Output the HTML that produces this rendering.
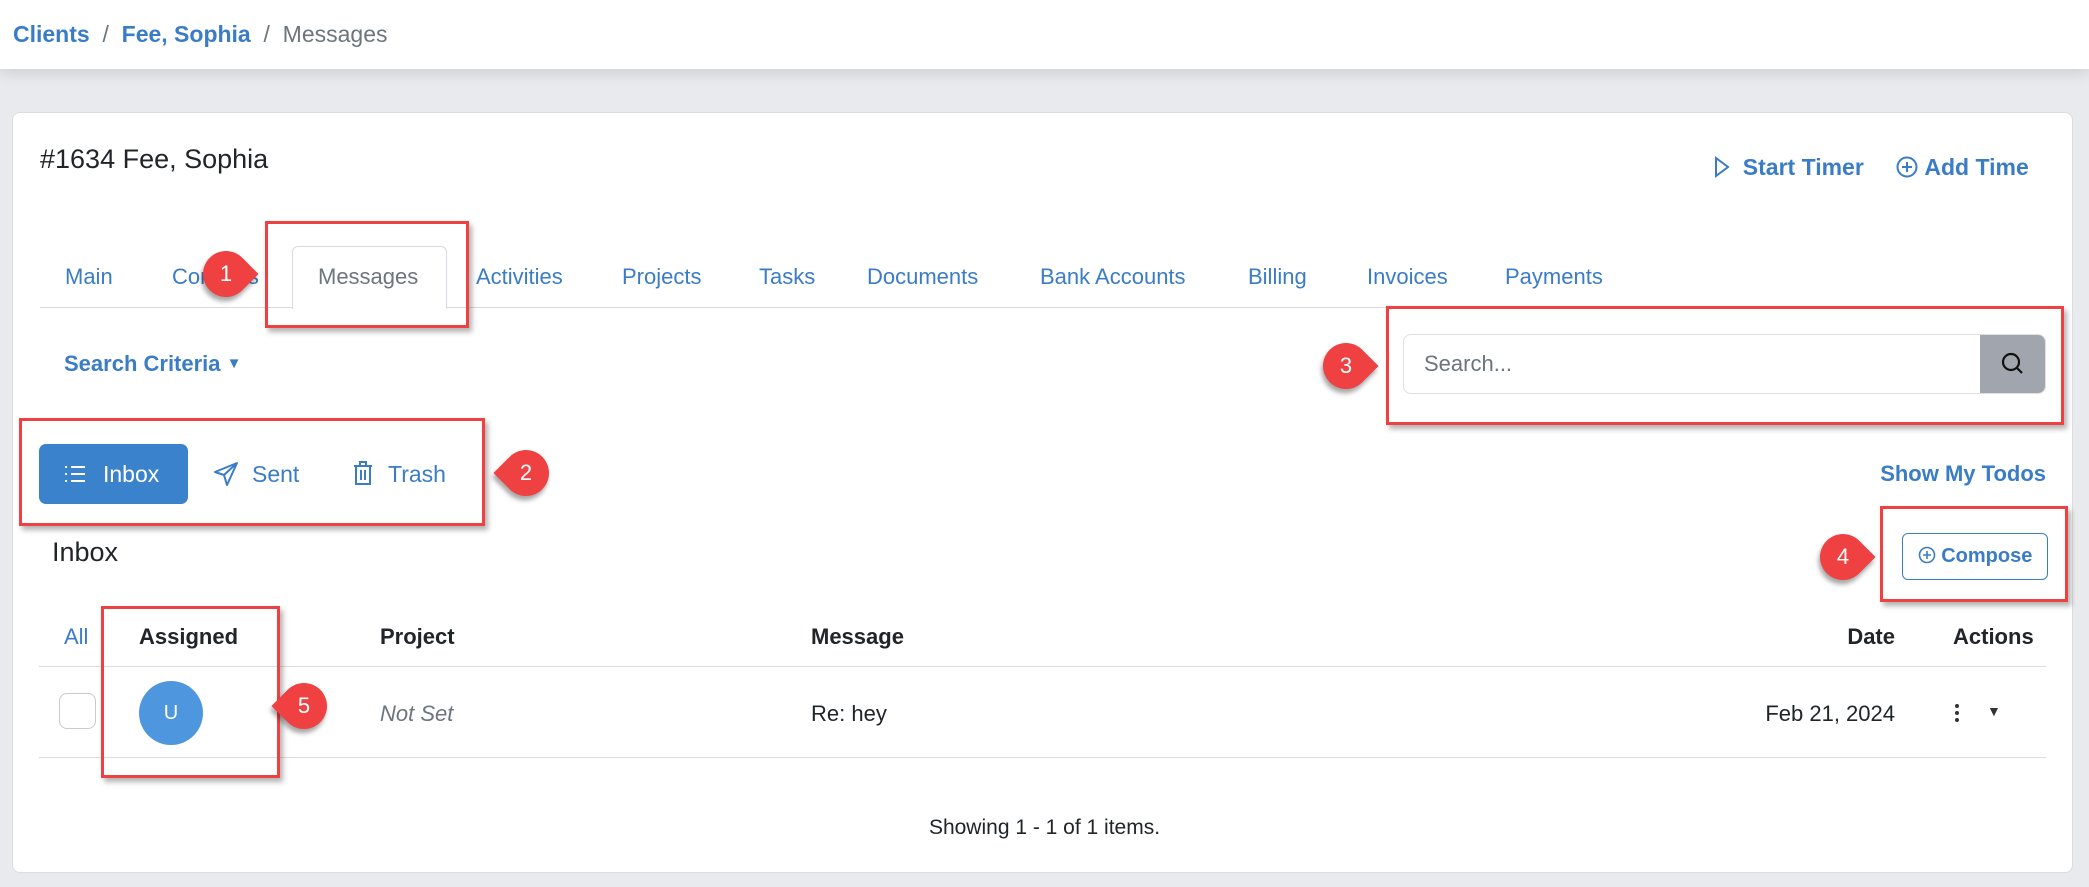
<!DOCTYPE html>
<html><head><meta charset="utf-8"><style>
*{box-sizing:border-box;margin:0;padding:0}
body{width:2089px;height:887px;background:#e9eaed;font-family:"Liberation Sans",sans-serif;position:relative;overflow:hidden;color:#212529}
.abs{position:absolute;white-space:nowrap}
.hdr{position:absolute;left:0;top:0;width:2089px;height:69px;background:#fff;box-shadow:0 4px 14px rgba(0,0,0,.12)}
.blue{color:#3a7cc6}
.card{position:absolute;left:12px;top:112px;width:2061px;height:761px;background:#fff;border:1px solid #dcdde0;border-radius:8px}
.tab{position:absolute;top:264px;font-size:22px;color:#3a7cc6}
.th{position:absolute;top:624px;font-size:22px;font-weight:bold}
.rb{position:absolute;border:3px solid #ef4141;box-shadow:3px 4px 5px rgba(0,0,0,.3)}
.pin{position:absolute;width:46px;height:46px}
.pin i{position:absolute;inset:0;background:#ef4141;box-shadow:2px 4px 5px rgba(0,0,0,.35)}
.pin.r i{border-radius:50% 0 50% 50%;transform:rotate(45deg)}
.pin.l i{border-radius:50% 50% 50% 0;transform:rotate(45deg)}
.pin span{position:absolute;inset:0;color:#fff;font-size:22px;text-align:center;line-height:46px}
</style></head><body>
<div class="hdr"></div>
<div class="abs" style="left:13px;top:21px;font-size:23px"><b class="blue">Clients</b><span style="color:#6c757d"> &nbsp;/&nbsp; </span><b class="blue">Fee, Sophia</b><span style="color:#6c757d"> &nbsp;/&nbsp; Messages</span></div>
<div class="card"></div>
<div class="abs" style="left:40px;top:144px;font-size:27px">#1634 Fee, Sophia</div>
<div class="abs blue" style="left:1714px;top:154px;font-size:23px;font-weight:bold">
<svg width="16" height="22" viewBox="0 0 16 22" style="vertical-align:-3px"><path d="M2 2 L14 11 L2 20 Z" fill="none" stroke="#3a7cc6" stroke-width="2"/></svg>&nbsp; Start Timer</div>
<div class="abs blue" style="left:1896px;top:154px;font-size:23px;font-weight:bold">
<svg width="22" height="22" viewBox="0 0 22 22" style="vertical-align:-3px"><circle cx="11" cy="11" r="9.5" fill="none" stroke="#3a7cc6" stroke-width="2"/><path d="M11 6v10M6 11h10" stroke="#3a7cc6" stroke-width="2"/></svg>&nbsp;Add Time</div>
<div class="abs" style="left:40px;top:307px;width:2006px;height:1px;background:#d8dadf"></div>
<div class="abs" style="left:292px;top:246px;width:155px;height:63px;background:#fff;border:1px solid #d8dadf;border-bottom:none;border-radius:6px 6px 0 0"></div>
<div class="tab" style="left:65px">Main</div>
<div class="tab" style="left:172px">Contacts</div>
<div class="tab" style="left:318px;color:#6c757d">Messages</div>
<div class="tab" style="left:476px">Activities</div>
<div class="tab" style="left:622px">Projects</div>
<div class="tab" style="left:759px">Tasks</div>
<div class="tab" style="left:867px">Documents</div>
<div class="tab" style="left:1040px">Bank Accounts</div>
<div class="tab" style="left:1248px">Billing</div>
<div class="tab" style="left:1367px">Invoices</div>
<div class="tab" style="left:1505px">Payments</div>
<div class="abs blue" style="left:64px;top:351px;font-size:22px;font-weight:bold">Search Criteria <span style="font-size:15px;vertical-align:3px">&#9660;</span></div>
<div class="abs" style="left:1403px;top:334px;width:643px;height:60px;border:1px solid #dee0e3;border-radius:8px;overflow:hidden">
<div class="abs" style="left:20px;top:16px;font-size:22px;color:#6c757d">Search...</div>
<div class="abs" style="right:0;top:0;width:65px;height:60px;background:#a1a6ae"><svg width="26" height="26" viewBox="0 0 26 26" style="position:absolute;left:20px;top:16px"><circle cx="11" cy="11" r="8" fill="none" stroke="#111" stroke-width="2.2"/><path d="M17 17l5 5" stroke="#111" stroke-width="2.2"/></svg></div></div>
<div class="abs" style="left:39px;top:444px;width:149px;height:60px;background:#3a82cc;border-radius:7px"></div>
<svg class="abs" style="left:64px;top:464px" width="22" height="20" viewBox="0 0 22 20"><g stroke="#fff" stroke-width="2"><path d="M1 3h2M1 10h2M1 17h2M7 3h14M7 10h14M7 17h14"/></g></svg>
<div class="abs" style="left:103px;top:461px;font-size:23px;color:#fff">Inbox</div>
<svg class="abs" style="left:213px;top:461px" width="26" height="26" viewBox="0 0 26 26"><path d="M24 2 L2 11 L11 14 L14 24 Z M11 14 L24 2" fill="none" stroke="#3a7cc6" stroke-width="2" stroke-linejoin="round"/></svg>
<div class="abs blue" style="left:252px;top:461px;font-size:23px">Sent</div>
<svg class="abs" style="left:352px;top:460px" width="22" height="26" viewBox="0 0 22 26"><path d="M2 6h18M8 6V2h6v4M4 6v18h14V6M9 10v10M13 10v10" fill="none" stroke="#3a7cc6" stroke-width="2"/></svg>
<div class="abs blue" style="left:388px;top:461px;font-size:23px">Trash</div>
<div class="abs blue" style="right:43px;top:461px;font-size:22px;font-weight:bold">Show My Todos</div>
<div class="abs" style="left:52px;top:537px;font-size:27px">Inbox</div>
<div class="abs blue" style="left:1902px;top:533px;width:146px;height:47px;border:1px solid #3a7cc6;border-radius:6px;font-size:20px;font-weight:bold;line-height:45px;text-align:center">
<svg width="18" height="18" viewBox="0 0 18 18" style="vertical-align:-2px"><circle cx="9" cy="9" r="7.5" fill="none" stroke="#3a7cc6" stroke-width="1.6"/><path d="M9 5v8M5 9h8" stroke="#3a7cc6" stroke-width="1.6"/></svg> Compose</div>
<div class="th blue" style="left:64px;font-weight:normal">All</div>
<div class="th" style="left:139px">Assigned</div>
<div class="th" style="left:380px">Project</div>
<div class="th" style="left:811px">Message</div>
<div class="th" style="right:194px">Date</div>
<div class="th" style="left:1953px">Actions</div>
<div class="abs" style="left:39px;top:666px;width:2007px;height:1px;background:#dcdde0"></div>
<div class="abs" style="left:59px;top:693px;width:37px;height:36px;border:1px solid #c9cbcf;border-radius:8px"></div>
<div class="abs" style="left:139px;top:681px;width:64px;height:64px;border-radius:50%;background:#4e97de;color:#fff;font-size:20px;text-align:center;line-height:64px">U</div>
<div class="abs" style="left:380px;top:701px;font-size:22px;font-style:italic;color:#6c757d">Not Set</div>
<div class="abs" style="left:811px;top:701px;font-size:22px">Re: hey</div>
<div class="abs" style="right:194px;top:701px;font-size:22px">Feb 21, 2024</div>
<svg class="abs" style="left:1953px;top:702px" width="8" height="22" viewBox="0 0 8 22"><g fill="#333"><circle cx="4" cy="4" r="2"/><circle cx="4" cy="11" r="2"/><circle cx="4" cy="18" r="2"/></g></svg>
<div class="abs" style="left:1987px;top:703px;font-size:14px;color:#333">&#9660;</div>
<div class="abs" style="left:39px;top:757px;width:2007px;height:1px;background:#dcdde0"></div>
<div class="abs" style="left:0;width:2089px;top:816px;font-size:21px;text-align:center;padding-left:0">Showing 1 - 1 of 1 items.</div>
<div class="rb" style="left:265px;top:221px;width:204px;height:107px"></div>
<div class="rb" style="left:19px;top:418px;width:466px;height:108px"></div>
<div class="rb" style="left:1386px;top:306px;width:678px;height:119px"></div>
<div class="rb" style="left:1880px;top:506px;width:188px;height:96px"></div>
<div class="rb" style="left:101px;top:606px;width:179px;height:172px"></div>
<div class="pin r" style="left:203px;top:251px"><i></i><span>1</span></div>
<div class="pin l" style="left:503px;top:450px"><i></i><span>2</span></div>
<div class="pin r" style="left:1323px;top:343px"><i></i><span>3</span></div>
<div class="pin r" style="left:1820px;top:534px"><i></i><span>4</span></div>
<div class="pin l" style="left:281px;top:683px"><i></i><span>5</span></div>
</body></html>
